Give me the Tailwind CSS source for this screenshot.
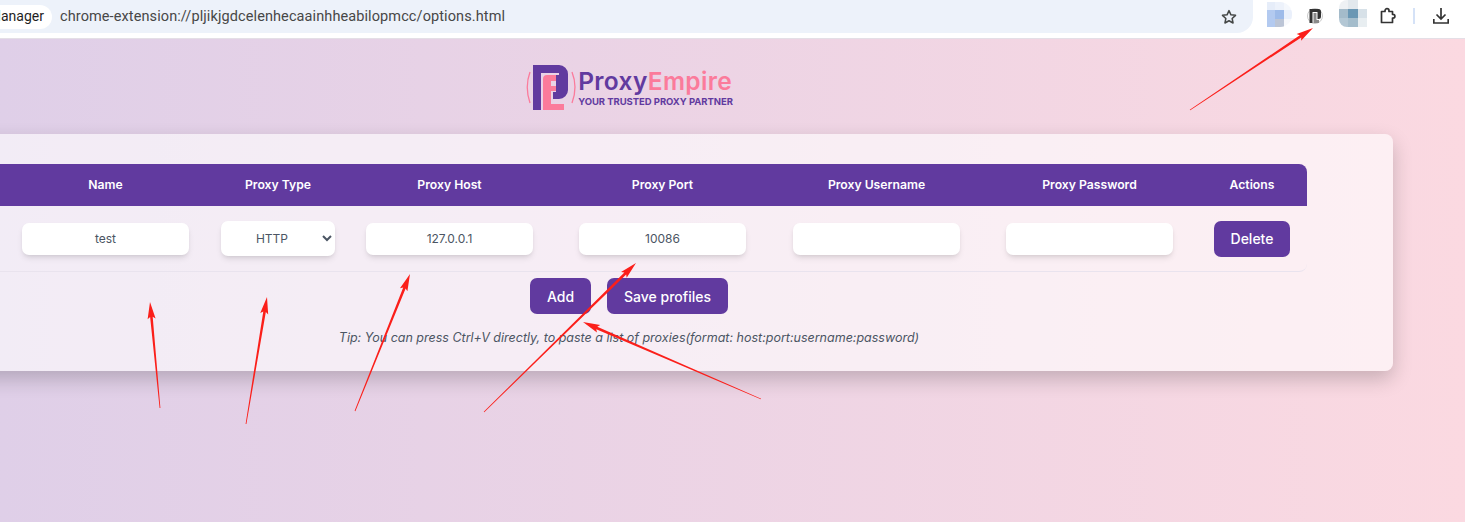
<!DOCTYPE html>
<html lang="en">
<head>
  <meta charset="UTF-8">
  <title>ProxyEmpire options</title>
  <script src="https://cdn.jsdelivr.net/npm/@tailwindcss/browser@4"></script>
</head>
<body class="relative h-[522px] w-[1465px] overflow-hidden bg-white font-['Inter',sans-serif]">

  <!-- Browser toolbar -->
  <div class="flex h-[39px] items-start border-b border-[#e4dfe6] bg-white">
    <div class="flex h-[33px] w-[1253px] shrink-0 items-center rounded-br-[16px] bg-[#edf2fa]">
      <div class="flex h-[24px] w-[52px] shrink-0 items-center justify-end overflow-hidden rounded-r-full bg-white pr-[8px] font-['Roboto',sans-serif] text-[14px] text-[#1f1f1f]">Manager</div>
      <div class="ml-[8px] font-['Roboto',sans-serif] text-[14.500px] tracking-[0.1px] text-[#474747]">chrome-extension://pljikjgdcelenhecaainhheabilopmcc/options.html</div>
      <svg class="ml-auto mr-[15px] h-[18px] w-[18px]" viewBox="0 0 24 24" fill="none" stroke="#444746" stroke-width="2" stroke-linejoin="round"><path d="M12 3.500l2.600 5.600 6.100.7-4.500 4.200 1.200 6-5.400-3-5.400 3 1.200-6-4.500-4.200 6.100-.7z"/></svg>
    </div>
    <div class="flex items-start">
      <!-- blurred extension -->
      <div class="ml-[14px] mt-[2px] grid h-[25px] w-[25px] grid-cols-3 grid-rows-3 overflow-hidden rounded-r-[12px]">
        <div class="bg-[#e6edf9]"></div><div class="bg-[#edf2fb]"></div><div class="bg-[#f5f8fd]"></div>
        <div class="bg-[#b3caf0]"></div><div class="bg-[#9ebbe9]"></div><div class="bg-[#eaf0fb]"></div>
        <div class="bg-[#b3caf0]"></div><div class="bg-[#bcc5d6]"></div><div class="bg-[#f8f9fc]"></div>
      </div>
      <!-- ProxyEmpire extension -->
      <svg class="ml-[15px] mt-[8px] h-[16px] w-[16px]" viewBox="0 0 16 16" fill="none">
        <circle cx="8" cy="8" r="7.500" stroke="#c9c9c9"/>
        <path d="M2.500 1h9a2.500 2.500 0 0 1 2.500 2.500v5A2.500 2.500 0 0 1 11.500 11H10.500V4H5.500v11h-3z" fill="#333"/>
        <path d="M6.500 5h3v7h2.500v3H6.500z" fill="#8a8a8a"/>
      </svg>
      <!-- blurred extension -->
      <div class="ml-[16px] grid h-[27px] w-[28px] grid-cols-3 grid-rows-3 overflow-hidden rounded-l-[8px]">
        <div class="bg-[#eef1f4]"></div><div class="bg-[#e2e8ed]"></div><div class="bg-white"></div>
        <div class="bg-[#a4bbca]"></div><div class="bg-[#6a97b4]"></div><div class="bg-[#d7e1e8]"></div>
        <div class="bg-[#b3c7d4]"></div><div class="bg-[#a4bdcc]"></div><div class="bg-[#e8eef1]"></div>
      </div>
      <!-- puzzle piece -->
      <svg class="ml-[13px] mt-[7px] h-[17px] w-[17px]" viewBox="0 0 17 17" fill="none" stroke="#333" stroke-width="1.700" stroke-linejoin="round"><path d="M1.500 4.500h3.500v-.8a2 2 0 0 1 4 0v.8h3.500v2.800h.5a1.900 1.900 0 0 1 0 3.800h-.5v4.400H1.500z"/></svg>
      <div class="ml-[16px] mt-[8px] h-[16px] w-[2px] bg-[#d5e2f7]"></div>
      <!-- download -->
      <svg class="ml-[18px] mt-[8px] h-[16px] w-[16px]" viewBox="0 0 16 16" fill="none" stroke="#333" stroke-width="1.700"><path d="M8 0v10.500M3.500 6.500L8 11l4.500-4.500M.8 11v4h14.400v-4"/></svg>
    </div>
  </div>

  <!-- Page -->
  <div class="h-[483px] bg-gradient-to-r from-[#dfcfe8] to-[#fbd9e1]">
    <div class="ml-[-135px] w-[1528px]">

      <!-- Logo -->
      <div class="flex h-[95px] items-start justify-center pt-[23px]">
        <svg class="h-[50px] w-[54px]" viewBox="0 0 54 50" fill="none">
          <path d="M5 10 Q-0.500 25 5 41" stroke="#fb7b9b" stroke-width="1.300"/>
          <path d="M47 10 Q53 25 47 41" stroke="#fb7b9b" stroke-width="1.300"/>
          <path d="M8 3h26a9 9 0 0 1 9 9v16a9 9 0 0 1-9 9h-6v-7h6V11H16v37H8z" fill="#613a9f"/>
          <path d="M22 13h9v6h-5v5h5v5h-5v13h13v6H18V17a4 4 0 0 1 4-4z" fill="#fb7b9b"/>
          <path d="M31 13h3v17h-3z" fill="#613a9f"/>
        </svg>
        <div class="ml-[-1px] mt-[4px]">
          <div class="text-[24.500px] font-semibold leading-[30px] tracking-[0.35px] text-[#613a9f]">Proxy<span class="text-[#fb7b9b]">Empire</span></div>
          <div class="text-[9.500px] font-bold leading-[12px] tracking-[-0.05px] text-[#613a9f]">YOUR TRUSTED PROXY PARTNER</div>
        </div>
      </div>

      <!-- Card -->
      <div class="h-[237px] rounded-[8px] bg-white/60 pt-[30px] shadow-[0_8px_20px_rgba(0,0,0,0.2)]">
        <div class="mx-auto w-[1356px]">
          <div class="grid h-[42px] grid-cols-[55px_199px_146px_197px_229px_199px_227px_98px] items-center rounded-t-[8px] bg-[#613a9f] pr-[6px] text-center text-[12.200px] font-semibold text-white">
            <div></div>
            <div>Name</div>
            <div>Proxy Type</div>
            <div>Proxy Host</div>
            <div>Proxy Port</div>
            <div>Proxy Username</div>
            <div>Proxy Password</div>
            <div>Actions</div>
          </div>
          <div class="grid h-[66px] grid-cols-[55px_199px_146px_197px_229px_199px_227px_98px] items-center rounded-b-[8px] border-b border-[#e9e3ee] pr-[6px] text-center text-[12px] text-[#4b5563]">
            <div></div>
            <div class="flex justify-center"><input value="test" class="h-[32px] w-[167px] rounded-[7px] bg-white text-center shadow-md outline-none"></div>
            <div class="flex justify-center"><select class="h-[35px] w-[114px] rounded-[7px] bg-white text-center shadow-md outline-none"><option>HTTP</option></select></div>
            <div class="flex justify-center"><input value="127.0.0.1" class="h-[32px] w-[167px] rounded-[7px] bg-white text-center shadow-md outline-none"></div>
            <div class="flex justify-center"><input value="10086" class="h-[32px] w-[167px] rounded-[7px] bg-white text-center shadow-md outline-none"></div>
            <div class="flex justify-center"><input class="h-[32px] w-[167px] rounded-[7px] bg-white text-center shadow-md outline-none"></div>
            <div class="flex justify-center"><input class="h-[32px] w-[167px] rounded-[7px] bg-white text-center shadow-md outline-none"></div>
            <div class="flex justify-center"><button class="h-[36px] w-[76px] shrink-0 rounded-[7px] bg-[#613a9f] text-[14px] font-medium text-white">Delete</button></div>
          </div>
          <div class="mt-[6px] flex justify-center gap-[16px]">
            <button class="h-[36px] w-[61px] rounded-[7px] bg-[#613a9f] text-[14px] font-medium text-white">Add</button>
            <button class="h-[36px] w-[121px] rounded-[7px] bg-[#613a9f] text-[14px] font-medium text-white">Save profiles</button>
          </div>
          <p class="mt-[15px] text-center text-[12.500px] italic text-[#4b5563]">Tip: You can press Ctrl+V directly, to paste a list of proxies(format: host:port:username:password)</p>
        </div>
      </div>
    </div>
  </div>

  <!-- Red annotation arrows drawn on top of the screenshot -->
  <svg id="arrows" class="pointer-events-none absolute left-0 top-0 h-[522px] w-[1465px]" viewBox="0 0 1465 522"></svg>

  <script>
    const arrows = [
      [1190, 110, 1313, 28],
      [160, 408, 150, 302],
      [246, 424, 267, 297],
      [355, 411, 410, 274],
      [484, 412, 636, 263],
      [761, 399, 583, 322]
    ];

    // thin tail, thicker toward the head, then a narrow barbed tip
    function arrowPoints([x1, y1, x2, y2]) {
      const len = Math.hypot(x2 - x1, y2 - y1);
      const ux = (x2 - x1) / len, uy = (y2 - y1) / len;
      const at = (along, side) => `${x2 - ux * along - uy * side},${y2 - uy * along + ux * side}`;
      return [
        at(len, 0.4), at(15, 1.3), at(17, 4), at(0, 0),
        at(17, -4), at(15, -1.3), at(len, -0.4)
      ].join(' ');
    }

    document.getElementById('arrows').innerHTML = arrows
      .map(a => `<polygon points="${arrowPoints(a)}" fill="#fb1f1a"/>`)
      .join('');
  </script>
</body>
</html>
